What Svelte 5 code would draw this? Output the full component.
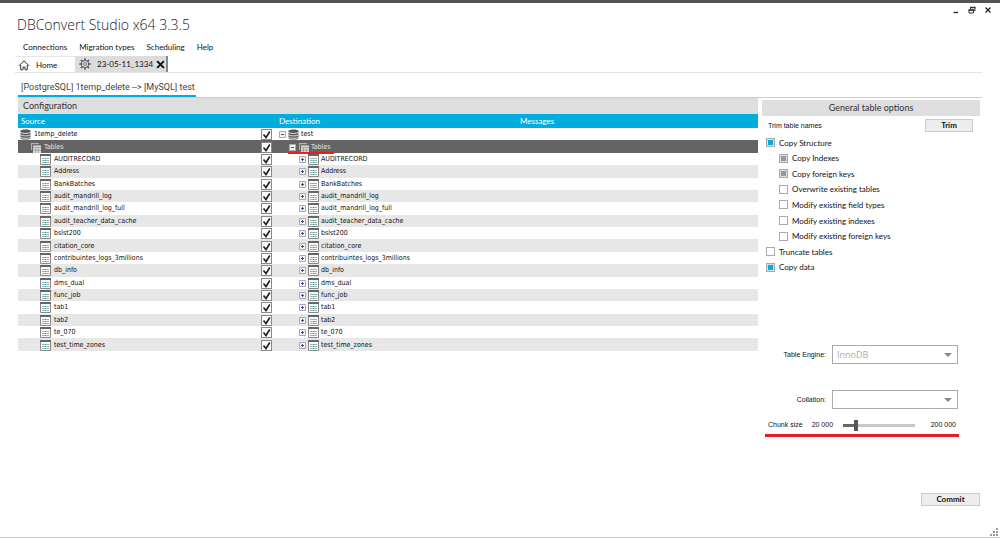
<script>
    const names = [
        'AUDITRECORD',
        'Address',
        'BankBatches',
        'audit_mandrill_log',
        'audit_mandrill_log_full',
        'audit_teacher_data_cache',
        'bslst200',
        'citation_core',
        'contribuintes_logs_3millions',
        'db_info',
        'dms_dual',
        'func_job',
        'tab1',
        'tab2',
        'te_070',
        'test_time_zones',
    ];

    let rows = [
        { source: '1temp_delete', dest: 'test', level: 0, icon: 'db', open: true, checked: true },
        { source: 'Tables', dest: 'Tables', level: 1, icon: 'tables', open: true, checked: true },
        ...names.map((name) => ({ source: name, dest: name, level: 2, icon: 'table', open: false, checked: true })),
    ];

    let options = [
        { label: 'Copy Structure', checked: true },
        { label: 'Copy Indexes', checked: true, sub: true },
        { label: 'Copy foreign keys', checked: true, sub: true },
        { label: 'Overwrite existing tables', checked: false, sub: true },
        { label: 'Modify existing field types', checked: false, sub: true },
        { label: 'Modify existing indexes', checked: false, sub: true },
        { label: 'Modify existing foreign keys', checked: false, sub: true },
        { label: 'Truncate tables', checked: false },
        { label: 'Copy data', checked: true },
    ];

    const menu = ['Connections', 'Migration types', 'Scheduling', 'Help'];

    let engine = 'InnoDB';
    let collation = '';
    let chunk = 48000;

    // part of the track left of the thumb
    $: filled = ((chunk - 20000) / 180000) * 100;
</script>

{#snippet nodeIcon(icon)}
    {#if icon === 'db'}
        <svg class="icon" viewBox="0 0 11 11">
            <path d="M.5 2C.5 0 10.500 0 10.500 2V9C10.500 11 .5 11 .5 9Z" fill="#555" />
            <path d="M.3 3.300C2 4.800 9 4.800 10.700 3.300M.3 5.800C2 7.300 9 7.300 10.700 5.800M.3 8.200C2 9.700 9 9.700 10.700 8.200" fill="none" stroke="#e4e4e4" stroke-width="1" />
        </svg>
    {:else if icon === 'tables'}
        <svg class="icon" viewBox="0 0 11 11">
            <path d="M1.500 8V1.500H9" fill="none" stroke="#b4b4b4" />
            <path d="M1 1H9V2.200H1Z" fill="#b4b4b4" />
            <path d="M3 3.500H11V11H3Z" fill="#dcdcdc" />
            <path d="M3 5.500H11M5.500 5.500V11M8.300 5.500V11M3 8.200H11" stroke="#888" stroke-width=".6" />
        </svg>
    {:else}
        <svg class="icon" viewBox="0 0 11 11">
            <path d="M.5.5H10.500V10.500H.5Z" fill="#fafafa" stroke="#888" />
            <path d="M0 0H11V2H0Z" fill="#666" />
            <path d="M2 4.500H4M2 6.500H4M2 8.500H4M7 4.500H9M7 6.500H9M7 8.500H9" stroke="#aaa" />
            <path d="M4.500 4.500H6.500M4.500 6.500H6.500M4.500 8.500H6.500" stroke="#27a5a0" />
        </svg>
    {/if}
{/snippet}

<div class="window">
    <div class="window-buttons">
        <button aria-label="Minimize">
            <svg viewBox="0 0 8 8"><path d="M1.500 6.500H6" stroke="#222" stroke-width="1.300" /></svg>
        </button>
        <button aria-label="Restore">
            <svg viewBox="0 0 8 8"><path d="M2.500 3V1.500H7V4.500H5.500M1 4H5.500V7H1Z" fill="none" stroke="#333" /><path d="M2 1.500H7.500M.5 4H6" stroke="#333" stroke-width="1.500" /></svg>
        </button>
        <button aria-label="Close">
            <svg viewBox="0 0 8 8"><path d="M1.500 1.500L6.500 6.500M6.500 1.500L1.500 6.500" stroke="#222" stroke-width="1.300" /></svg>
        </button>
    </div>

    <h1>DBConvert Studio x64 3.3.5</h1>

    <nav class="menu">
        {#each menu as item}
            <button>{item}</button>
        {/each}
    </nav>

    <div class="tabs">
        <button class="tab home">
            <svg viewBox="0 0 12 12"><path d="M1 6.800L6 1.800L11 6.800M2.700 6V10.800H5V8H7V10.800H9.300V6" fill="none" stroke="#333" /></svg>
            Home
        </button>
        <div class="tab active">
            <svg viewBox="0 0 12 12">
                <path d="M6 .3V2.500M6 9.500V11.700M.3 6H2.500M9.500 6H11.700M2 2L3.500 3.500M8.500 8.500L10 10M10 2L8.500 3.500M3.500 8.500L2 10" stroke="#555" stroke-width="1.500" />
                <circle cx="6" cy="6" r="3.700" fill="none" stroke="#555" />
                <circle cx="6" cy="6" r="1.500" fill="none" stroke="#666" stroke-width=".8" />
            </svg>
            <span>23-05-11_1334</span>
            <button class="close" aria-label="Close tab">
                <svg viewBox="0 0 8 8"><path d="M1 1L7 7M7 1L1 7" stroke="#111" stroke-width="1.800" /></svg>
            </button>
        </div>
    </div>

    <div class="session"><span>[PostgreSQL] 1temp_delete --&gt; [MySQL] test</span></div>

    <main>
        <section>
            <h2>Configuration</h2>
            <table>
                <thead>
                    <tr><th class="source">Source</th><th class="check"></th><th class="dest">Destination</th><th>Messages</th></tr>
                </thead>
                <tbody>
                    {#each rows as row, i}
                        <tr class:selected={row.level === 1} class:odd={row.level === 2 && i % 2 === 1}>
                            <td>
                                <div class="node level{row.level}">
                                    {@render nodeIcon(row.icon)}
                                    <span>{row.source}</span>
                                </div>
                            </td>
                            <td class="check"><input type="checkbox" aria-label={row.source} bind:checked={row.checked} /></td>
                            <td class="dest">
                                <div class="node level{row.level}">
                                    <button class="toggle" aria-label="Toggle {row.dest}" on:click={() => (row.open = !row.open)}>
                                        <svg viewBox="0 0 7 7">
                                            <path d="M.5.5H6.500V6.500H.5Z" fill="#f4f4f4" stroke="#aaa" />
                                            <path d={row.open ? 'M2 3.500H5' : 'M2 3.500H5M3.500 2V5'} stroke="#3c4f96" />
                                        </svg>
                                    </button>
                                    {@render nodeIcon(row.icon)}
                                    <span>{row.dest}</span>
                                    {#if row.level === 1}<i class="mark"></i>{/if}
                                </div>
                            </td>
                            <td></td>
                        </tr>
                    {/each}
                </tbody>
            </table>
        </section>

        <aside>
            <h2>General table options</h2>
            <div class="trim">
                <span>Trim table names</span>
                <button class="push">Trim</button>
            </div>
            <div class="options">
                {#each options as option}
                    <label class:sub={option.sub}>
                        <input type="checkbox" bind:checked={option.checked} />
                        {option.label}
                    </label>
                {/each}
            </div>

            <div class="field">
                <label for="engine">Table Engine:</label>
                <select id="engine" bind:value={engine} disabled>
                    <option>InnoDB</option>
                </select>
            </div>
            <div class="field">
                <label for="collation">Collation:</label>
                <select id="collation" bind:value={collation}>
                    <option value=""></option>
                </select>
            </div>
            <div class="chunk">
                <label for="chunk">Chunk size</label>
                <span class="min">20 000</span>
                <input id="chunk" type="range" min="20000" max="200000" step="1000" bind:value={chunk} style="--filled: {filled}%" />
                <span class="max">200 000</span>
            </div>
            <button class="push commit">Commit</button>
        </aside>
    </main>

    <footer>
        <svg viewBox="0 0 8 8"><path d="M6 0H8V2H6ZM3 3H5V5H3ZM6 3H8V5H6ZM0 6H2V8H0ZM3 6H5V8H3ZM6 6H8V8H6Z" fill="#999" /></svg>
    </footer>
</div>

<style>
:global(body) {
    margin: 0;
    background: #fff;
}

.window {
    box-sizing: border-box;
    display: flex;
    flex-direction: column;
    min-height: 100vh;
    border-top: 3px solid #555;
    border-bottom: 1px solid #c8c8c4;
    font-family: Lato, 'Open Sans', sans-serif;
    font-size: 8px;
    line-height: 12px;
    color: #111;
}

button {
    font: inherit;
    color: inherit;
    border: 0;
    padding: 0;
    background: none;
    white-space: nowrap;
}

svg {
    display: block;
    flex: none;
}

.window-buttons {
    display: flex;
    justify-content: flex-end;
    gap: 8px;
    padding: 3px 8px 0 0;
}
.window-buttons svg {
    width: 8px;
    height: 8px;
}

h1 {
    margin: 0 0 0 17px;
    font-family: 'Open Sans', sans-serif;
    font-size: 14px;
    font-weight: 300;
    line-height: 22px;
    color: #222;
}

.menu {
    display: flex;
    gap: 12px;
    padding: 5px 0 3px 23px;
}

.tabs {
    display: flex;
    margin: 0 18px 0 15px;
    border-bottom: 1px solid #e2e2e2;
}
.tab {
    display: flex;
    align-items: center;
    height: 16px;
}
.tab svg {
    width: 12px;
    height: 12px;
}
.home {
    gap: 6px;
    width: 60px;
    padding-left: 3px;
    border-top: 1px solid #e8e8e8;
    box-sizing: border-box;
}
.active {
    gap: 3px;
    padding: 0 1px 0 4px;
    background: #dcdcdc;
    border-right: 2px solid #888;
}
.active span {
    padding-left: 3px;
}
.active .close svg {
    width: 9px;
    height: 9px;
}

.session {
    display: flex;
    margin: 6px 18px 0;
    border-bottom: 1px solid #ccc;
    font-family: Roboto, sans-serif;
    font-size: 9px;
    line-height: 16px;
    color: #444;
}
.session span {
    width: 175px;
    padding-left: 3px;
    border-bottom: 2px solid #00addc;
    white-space: nowrap;
}

main {
    display: grid;
    grid-template-columns: 1fr 218px;
    gap: 4px;
    padding: 0 20px 0 18px;
    flex: 1;
}

h2 {
    margin: 0;
    background: #dedede;
    font-size: 9px;
    font-weight: 400;
    line-height: 16px;
    color: #333;
}
section h2 {
    padding-left: 5px;
}
aside h2 {
    margin-top: 2px;
    text-align: center;
}

table {
    width: 100%;
    height: 237px;
    table-layout: fixed;
    border-collapse: collapse;
}
th {
    height: 14px;
    padding: 0 3px;
    background: #00addc;
    color: #fff;
    font-weight: 400;
    text-align: left;
}
td {
    padding: 1px 0 0;
    font-family: 'DejaVu Sans Condensed', 'DejaVu Sans', sans-serif;
    font-stretch: condensed;
    font-size: 7px;
    line-height: 11px;
}
th.source {
    width: 237px;
}
th.check {
    width: 15px;
    padding: 0;
}
th.dest {
    width: 235px;
}
td.dest {
    padding-left: 1px;
}
.odd {
    background: #e7e7e7;
}
.selected {
    background: #646464;
    color: #e4e4e4;
}

.node {
    position: relative;
    display: flex;
    align-items: center;
    gap: 3px;
    height: 11px;
    padding-left: 2px;
    white-space: nowrap;
}
.node.level1 {
    padding-left: 12px;
}
.node.level2 {
    padding-left: 22px;
}
.dest .node {
    gap: 2px;
}
.icon {
    width: 11px;
    height: 11px;
}
.toggle svg {
    width: 7px;
    height: 7px;
}
.mark {
    position: absolute;
    left: 11px;
    bottom: -1px;
    width: 46px;
    height: 2px;
    background: #ec1c24;
}

input[type='checkbox'] {
    appearance: none;
    display: block;
    box-sizing: border-box;
    flex: none;
    width: 9px;
    height: 9px;
    margin: 0;
    background: #fff;
    border: 1px solid #aaa;
}
td.check input {
    width: 11px;
    height: 11px;
    border-color: #888;
}
td.check input:checked {
    background: #fff url("data:image/svg+xml,%3Csvg xmlns='http://www.w3.org/2000/svg' viewBox='0 0 9 9'%3E%3Cpath d='M1.500 4.500L4 7.500L7.800 1.500' fill='none' stroke='%23222' stroke-width='1.700'/%3E%3C/svg%3E");
}

aside {
    display: flex;
    flex-direction: column;
}
.trim {
    display: flex;
    align-items: center;
    justify-content: space-between;
    height: 19px;
    padding: 0 7px 0 6px;
}
.push {
    box-sizing: border-box;
    width: 48px;
    height: 13px;
    background: #ededed;
    border: 1px solid #ccc;
    font-weight: 700;
    line-height: 11px;
}
.options {
    display: grid;
    grid-auto-rows: 1fr;
    min-height: 140px;
    padding: 0 4px;
}
.options label {
    display: flex;
    align-items: center;
    gap: 4px;
}
.options .sub {
    padding-left: 13px;
}
.options input:checked {
    background: #00addc;
    box-shadow: inset 0 0 0 1px #ddd;
}
.options .sub input:checked {
    background: #999;
}

.field {
    display: flex;
    align-items: center;
    justify-content: flex-end;
    gap: 6px;
    margin: 70px 22px 0 0;
}
.field + .field {
    margin-top: 26px;
}
select {
    appearance: none;
    box-sizing: border-box;
    width: 126px;
    height: 19px;
    padding: 0 4px;
    border: 1px solid #aaa;
    border-radius: 0;
    background: #fff url("data:image/svg+xml,%3Csvg xmlns='http://www.w3.org/2000/svg' viewBox='0 0 8 4'%3E%3Cpath d='M0 0H8L4 4Z' fill='%23888'/%3E%3C/svg%3E") no-repeat right 5px center / 8px 4px;
    font-family: 'Open Sans', sans-serif;
    font-size: 9px;
    color: #222;
}
select:disabled {
    color: #aaa;
    opacity: 1;
}

.chunk {
    display: flex;
    align-items: center;
    margin: 9px 21px 0 3px;
    padding: 0 3px 2px;
    border-bottom: 3px solid #ec1c24;
    line-height: 14px;
}
.trim > span,
.field label,
.chunk {
    font-family: 'Liberation Sans', Arial, sans-serif;
    font-size: 7px;
}
.chunk .min {
    margin-left: 9px;
}
.chunk .max {
    margin-left: auto;
}
.chunk input {
    appearance: none;
    width: 72px;
    height: 11px;
    margin: 0 0 0 10px;
    background: linear-gradient(#666, #666) no-repeat left center / var(--filled) 3px, linear-gradient(#c8c8c8, #c8c8c8) no-repeat center / 100% 3px;
}
.chunk input::-webkit-slider-thumb {
    appearance: none;
    width: 4px;
    height: 11px;
    background: #555;
}

.commit {
    width: 59px;
    margin: 56px 0 0;
    align-self: flex-end;
}

footer {
    display: flex;
    justify-content: flex-end;
    padding: 0 2px 1px;
}
footer svg {
    width: 8px;
    height: 8px;
}
</style>
